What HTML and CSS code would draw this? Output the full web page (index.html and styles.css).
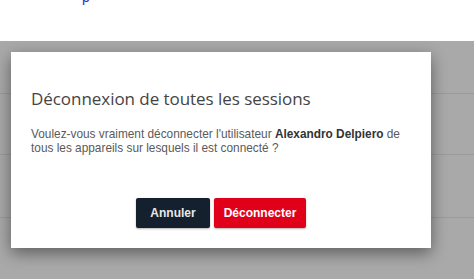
FILE: index.html
```html
<!DOCTYPE html>
<html lang="fr">
  <head>
    <meta charset="UTF-8" />
    <meta name="viewport" content="width=device-width, initial-scale=1.0" />
    <title>Sessions</title>
    <link rel="stylesheet" href="styles.css">
  </head>
  <body>
    <div class="topbar">
      <a class="link" href="#">p</a>
    </div>
    <div class="overlay">
      <div class="modal">
        <h2 class="modal-title">Déconnexion de toutes les sessions</h2>
        <p class="modal-text">
          Voulez-vous vraiment déconnecter l'utilisateur <b>Alexandro Delpiero</b> de
          tous les appareils sur lesquels il est connecté ?
        </p>
        <div class="actions">
          <button class="btn btn-dark">Annuler</button>
          <button class="btn btn-red">Déconnecter</button>
        </div>
      </div>
    </div>
  </body>
</html>
```

FILE: styles.css
```css
* {
  margin: 0;
  padding: 0;
  box-sizing: border-box;
}
body {
  width: 474px;
  height: 279px;
  overflow: hidden;
  background-color: #fff;
  font-family: "Liberation Sans", Arial, sans-serif;
}
.topbar {
  height: 41px;
  padding-left: 82px;
  overflow: hidden;
}
.link {
  display: block;
  margin-top: -11px;
  color: #2b2bd6;
  font-size: 14px;
  line-height: 16px;
  text-decoration: none;
}
.overlay {
  height: 238px;
  padding: 11px 0 0 11px;
  background-color: #a9a9a9;
  background-image:
    linear-gradient(#9b9b9b, #9b9b9b),
    linear-gradient(#9b9b9b, #9b9b9b),
    linear-gradient(#9b9b9b, #9b9b9b);
  background-size: 100% 1px;
  background-repeat: no-repeat;
  background-position: 0 52px, 0 113px, 0 176px;
}
.modal {
  width: 420px;
  height: 196px;
  padding: 36px 20px 0;
  background-color: #fff;
  box-shadow: 0 5px 15px rgba(0, 0, 0, 0.45);
  display: flex;
  flex-direction: column;
}
.modal-title {
  font-family: "Open Sans", "Noto Sans", sans-serif;
  font-weight: 400;
  font-size: 17px;
  line-height: 22px;
  color: #444;
  letter-spacing: -0.05px;
}
.modal-text {
  margin-top: 17px;
  font-size: 11.85px;
  line-height: 14px;
  color: #5a5a5a;
}
.modal-text b {
  color: #333;
}
.actions {
  margin-top: 43px;
  display: flex;
  justify-content: center;
  gap: 4px;
}
.btn {
  height: 30px;
  border: none;
  border-radius: 2px;
  color: #fff;
  font-family: "Liberation Sans", Arial, sans-serif;
  font-weight: 700;
  font-size: 12px;
  box-shadow: 0 1px 2px rgba(0, 0, 0, 0.3);
}
.btn-dark {
  width: 74px;
  background-color: #14202e;
  color: #e8e8e8;
}
.btn-red {
  width: 92px;
  background-color: #e1001a;
}
```
